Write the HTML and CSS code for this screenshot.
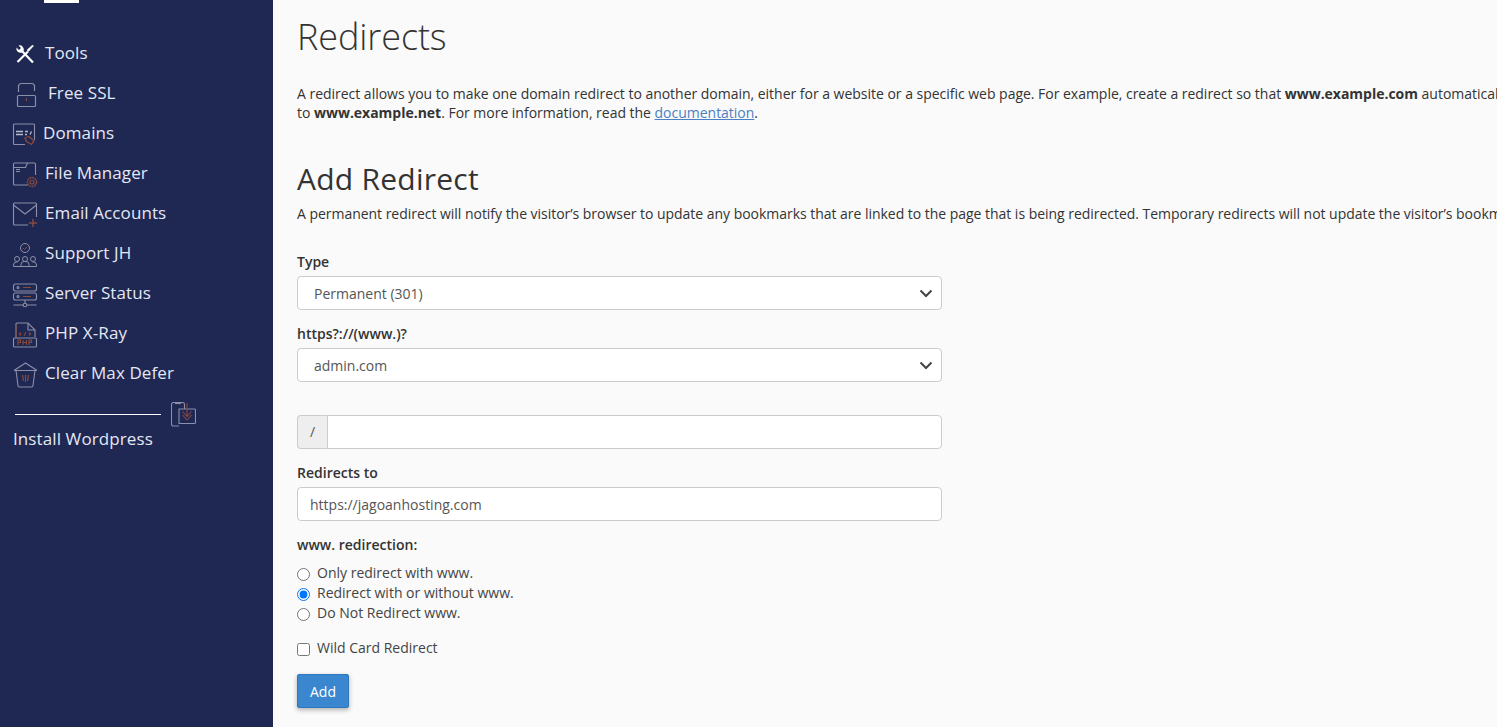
FILE: index.html
```html
<!DOCTYPE html>
<html lang="en">
<head>
  <meta charset="UTF-8">
  <title>Redirects</title>
  <link rel="stylesheet" href="styles.css">
</head>
<body>
  <div class="layout">
    <aside class="sidebar">
      <div class="logo-bit"></div>
      <nav class="nav">
        <a class="nav-item" href="#">
          <svg class="icon" width="32" height="26" viewBox="0 0 32 26" fill="none" stroke="#fff">
            <path d="M20 22.5L9 11" stroke-width="2.2"/>
            <path d="M3.5 7.5L6 10l2-2-2.500-2.500a4.200 4.200 0 0 1 5 5.500L9 12.500A4.200 4.200 0 0 1 3.500 7.500z" fill="#fff" stroke="none"/>
            <path d="M4.500 22L15 11.500" stroke-width="2.200"/>
            <path d="M14 10l4-3.500 1.500-1.500 1 1-1.500 1.500-3.500 4z" fill="#fff" stroke-width=".5"/>
          </svg>
          <span>Tools</span>
        </a>
        <a class="nav-item nav-item-ssl" href="#">
          <svg class="icon" width="35" height="26" viewBox="0 0 35 26" fill="none" stroke="#8b90a8" stroke-width="1.2">
            <path d="M5.5 12V6.500a3 3 0 0 1 3-3h10a3 3 0 0 1 3 3V11"/>
            <rect x="4.5" y="15.5" width="18" height="11" rx="1"/>
            <path d="M13.5 18v3" stroke="#8a4a3c"/>
          </svg>
          <span>Free SSL</span>
        </a>
        <a class="nav-item nav-item-domains" href="#">
          <svg class="icon" width="30" height="26" viewBox="0 0 30 26" fill="none" stroke="#8b90a8" stroke-width="1.1">
            <path d="M12 24.5H1.500a1 1 0 0 1-1-1V5a1 1 0 0 1 1-1h19a1 1 0 0 1 1 1v15"/>
            <path d="M3 11.5h7M12 11.5h3M3 14.5h7M12 14.5h2M17 14.5l1.500-3" stroke="#b8bbcc" stroke-width="1.3"/>
            <path d="M12 18l4-1.500 5 4.500-2.500 3.500-5-3z" stroke="#8a4a3c" stroke-width="1.3"/>
          </svg>
          <span>Domains</span>
        </a>
        <a class="nav-item" href="#">
          <svg class="icon" width="32" height="26" viewBox="0 0 32 26" fill="none" stroke="#8b90a8" stroke-width="1.1">
            <path d="M15 25H1.500a1 1 0 0 1-1-1V4a1 1 0 0 1 1-1h20a1 1 0 0 1 1 1v11"/>
            <path d="M.5 7.500h12l2-4.500M3 9.500h4M3 11.500h4"/>
            <circle cx="19" cy="22" r="4.5" stroke="#8a4a3c" stroke-dasharray="2 .6" stroke-width="1.4"/>
            <circle cx="19" cy="22" r="2" stroke="#8a4a3c"/>
          </svg>
          <span>File Manager</span>
        </a>
        <a class="nav-item" href="#">
          <svg class="icon" width="32" height="26" viewBox="0 0 32 26" fill="none" stroke="#8b90a8" stroke-width="1.1">
            <path d="M15 25H1.500a1 1 0 0 1-1-1V4a1 1 0 0 1 1-1h21a1 1 0 0 1 1 1v13"/>
            <path d="M.5 5L12 14l11.500-9"/>
            <path d="M20 19v8M16 23h8" stroke="#8a4a3c" stroke-width="1.5"/>
          </svg>
          <span>Email Accounts</span>
        </a>
        <a class="nav-item" href="#">
          <svg class="icon" width="32" height="26" viewBox="0 0 32 26" fill="none" stroke="#8b90a8" stroke-width="1">
            <circle cx="12" cy="8" r="4.5"/>
            <path d="M10 8l1.500 1.500L14 7" stroke="#8a4a3c"/>
            <circle cx="4" cy="19" r="2.5"/>
            <circle cx="12" cy="19" r="2.5"/>
            <circle cx="20" cy="19" r="2.5"/>
            <path d="M.5 26.500V25a3 3 0 0 1 3-3h1M8 26.500v-2a3 3 0 0 1 3-3h2a3 3 0 0 1 3 3v2M19.500 22h1a3 3 0 0 1 3 3v1.500M.5 26.500h23"/>
          </svg>
          <span>Support JH</span>
        </a>
        <a class="nav-item" href="#">
          <svg class="icon" width="32" height="26" viewBox="0 0 32 26" fill="none" stroke="#8b90a8" stroke-width="1.1">
            <rect x=".5" y="4" width="23" height="7" rx="2"/>
            <rect x=".5" y="13" width="23" height="7" rx="2"/>
            <circle cx="5" cy="7.5" r="1"/>
            <circle cx="5" cy="16.5" r="1"/>
            <path d="M10 7.500h8M10 16.500h8" stroke="#8a4a3c" stroke-width="1.2"/>
            <path d="M12 20v3M.5 25H10M14 25h9.500"/>
            <circle cx="12" cy="25" r="1.8"/>
          </svg>
          <span>Server Status</span>
        </a>
        <a class="nav-item" href="#">
          <svg class="icon" width="32" height="26" viewBox="0 0 32 26" fill="none" stroke="#8b90a8" stroke-width="1.1">
            <path d="M3 17V4a1 1 0 0 1 1-1h11l7 7v7"/>
            <path d="M15 3v7h7"/>
            <path d="M3 5v13" stroke="#8a4a3c"/>
            <rect x=".5" y="18" width="23" height="9" rx="1"/>
            <path d="M8 12.500L6.500 14 8 15.500M16 12.500l1.500 1.500-1.500 1.500M13 12l-2 4" stroke="#8a4a3c"/>
            <path d="M5 25v-5h2.500v2.500H5M10 25v-5M13.500 20v5M10 22.500h3.500M16 25v-5h2.500v2.500H16" stroke="#8a4a3c"/>
          </svg>
          <span>PHP X-Ray</span>
        </a>
        <a class="nav-item" href="#">
          <svg class="icon" width="32" height="26" viewBox="0 0 32 26" fill="none" stroke="#8b90a8" stroke-width="1.1">
            <path d="M1 10.500L12.500 3 24 10.500M1 10.500h23"/>
            <path d="M3 10.500l2 15A1.500 1.500 0 0 0 6.500 27h12a1.500 1.500 0 0 0 1.500-1.500l2-15"/>
            <path d="M9.500 15l1 6M12.500 15v7M15.500 15l-1 6" stroke="#8a4a3c" stroke-width="1.2"/>
          </svg>
          <span>Clear Max Defer</span>
        </a>
      </nav>
      <div class="install">
        <div class="install-top">
          <div class="install-line"></div>
          <svg width="25" height="25" viewBox="0 0 25 25" fill="none" stroke="#8b90a8" stroke-width="1.1">
            <path d="M8 24H2.500a2 2 0 0 1-2-2V2.500a2 2 0 0 1 2-2h9a2 2 0 0 1 2 2V7"/>
            <path d="M4 1.500h6"/>
            <path d="M8 7h15.500a1 1 0 0 1 1 1v12.500a1 1 0 0 1-1 1H8z"/>
            <path d="M16 1v14M11.500 9.500l4.500 5 4.500-5M11.500 13l4.500 5 4.500-5" stroke="#8a4a3c"/>
          </svg>
        </div>
        <a class="install-link" href="#">Install Wordpress</a>
      </div>
    </aside>

    <main class="content">
      <h1>Redirects</h1>
      <p class="intro">A redirect allows you to make one domain redirect to another domain, either for a website or a specific web page. For example, create a redirect so that <b>www.example.com</b> automatically redirects<br>to <b>www.example.net</b>. For more information, read the <a href="#">documentation</a>.</p>

      <h2>Add Redirect</h2>
      <p class="desc">A permanent redirect will notify the visitor’s browser to update any bookmarks that are linked to the page that is being redirected. Temporary redirects will not update the visitor’s bookmarks.</p>

      <form class="redirect-form">
        <div class="field">
          <label for="type">Type</label>
          <select id="type">
            <option>Permanent (301)</option>
          </select>
        </div>
        <div class="field">
          <label for="domain">https?://(www.)?</label>
          <select id="domain">
            <option>admin.com</option>
          </select>
        </div>
        <div class="input-group">
          <span class="addon">/</span>
          <input type="text">
        </div>
        <div class="field">
          <label for="target">Redirects to</label>
          <input type="text" id="target" value="https://jagoanhosting.com">
        </div>
        <div class="www-title">www. redirection:</div>
        <div class="radios">
          <label class="check"><input type="radio" name="www">Only redirect with www.</label>
          <label class="check"><input type="radio" name="www" checked>Redirect with or without www.</label>
          <label class="check"><input type="radio" name="www">Do Not Redirect www.</label>
        </div>
        <label class="check wild"><input type="checkbox">Wild Card Redirect</label>
        <button type="button">Add</button>
      </form>
    </main>
  </div>
</body>
</html>
```

FILE: styles.css
```css
html, body {
  height: 100%;
}
body {
  margin: 0;
  overflow: hidden;
  font-family: "Open Sans", sans-serif;
  font-size: 14px;
  line-height: 20px;
  color: #333;
  background: #fafafa;
}
.layout {
  display: flex;
  height: 727px;
}
.sidebar {
  width: 273px;
  flex-shrink: 0;
  background: #1f2753;
}
.logo-bit {
  width: 35px;
  height: 3px;
  margin-left: 44px;
  background: #fff;
}
.nav {
  display: flex;
  flex-direction: column;
  margin-top: 30px;
}
.nav-item {
  display: flex;
  align-items: center;
  height: 40px;
  padding-left: 13px;
  font-size: 17px;
  letter-spacing: .1px;
  color: #e4e8f4;
  text-decoration: none;
}
.icon {
  display: block;
  flex-shrink: 0;
  overflow: visible;
}
.install {
  padding: 9px 0 0 13px;
}
.install-top {
  display: flex;
  align-items: center;
  gap: 10px;
}
.install-top svg {
  display: block;
}
.install-line {
  width: 146px;
  height: 1px;
  margin-left: 2px;
  background: #fff;
}
.install-link {
  display: block;
  margin-top: 2px;
  font-size: 17px;
  letter-spacing: .1px;
  color: #e4e8f4;
  text-decoration: none;
}
.content {
  flex: 1;
  min-width: 0;
  padding-left: 24px;
  white-space: nowrap;
  overflow: hidden;
}
h1 {
  margin: 13px 0 0;
  font-size: 36px;
  line-height: 48px;
  font-weight: 300;
  letter-spacing: -.1px;
}
.intro {
  margin: 23px 0 0;
  line-height: 19px;
  letter-spacing: -.02px;
}
.intro a {
  color: #4a7fc1;
}
h2 {
  margin: 37px 0 0;
  font-size: 30px;
  line-height: 40px;
  font-weight: 400;
  letter-spacing: .25px;
}
.desc {
  margin: 5px 0 0;
  letter-spacing: -.03px;
}
.redirect-form {
  width: 645px;
  margin-top: 28px;
}
.field {
  margin-bottom: 14px;
}
.field label, .www-title {
  display: block;
  margin-bottom: 4px;
  font-weight: 600;
}
select, input[type="text"] {
  display: block;
  width: 100%;
  height: 34px;
  box-sizing: border-box;
  border: 1px solid #ccc;
  border-radius: 4px;
  background: #fff;
  font-family: "Open Sans", sans-serif;
  font-size: 14px;
  color: #555;
  padding: 0 12px;
}
select {
  appearance: none;
  padding-left: 16px;
  background-image: url("data:image/svg+xml,%3Csvg xmlns='http://www.w3.org/2000/svg' width='14' height='9' viewBox='0 0 14 9'%3E%3Cpath d='M1.5 1.500L7 7l5.500-5.500' fill='none' stroke='%23444' stroke-width='2'/%3E%3C/svg%3E");
  background-repeat: no-repeat;
  background-position: right 8px center;
}
.input-group {
  display: flex;
  margin: 33px 0 14px;
}
.addon {
  width: 30px;
  height: 34px;
  box-sizing: border-box;
  border: 1px solid #ccc;
  border-right: 0;
  border-radius: 4px 0 0 4px;
  background: #eee;
  color: #555;
  line-height: 32px;
  text-align: center;
}
.input-group input[type="text"] {
  flex: 1;
  width: auto;
  border-radius: 0 4px 4px 0;
}
.www-title {
  margin-bottom: 8px;
}
.check {
  display: flex;
  align-items: center;
  height: 20px;
  color: #444;
}
.check input {
  width: 13px;
  height: 13px;
  margin: 2px 7px 0 0;
}
.wild {
  margin-top: 15px;
}
button {
  display: block;
  width: 52px;
  height: 34px;
  margin-top: 16px;
  padding: 0;
  border: 1px solid #2e79bd;
  border-radius: 2px;
  background: #3a87cf;
  box-shadow: 0 2px 5px rgba(0, 0, 0, .3);
  font-family: "Open Sans", sans-serif;
  font-size: 14px;
  color: #fff;
}
```
